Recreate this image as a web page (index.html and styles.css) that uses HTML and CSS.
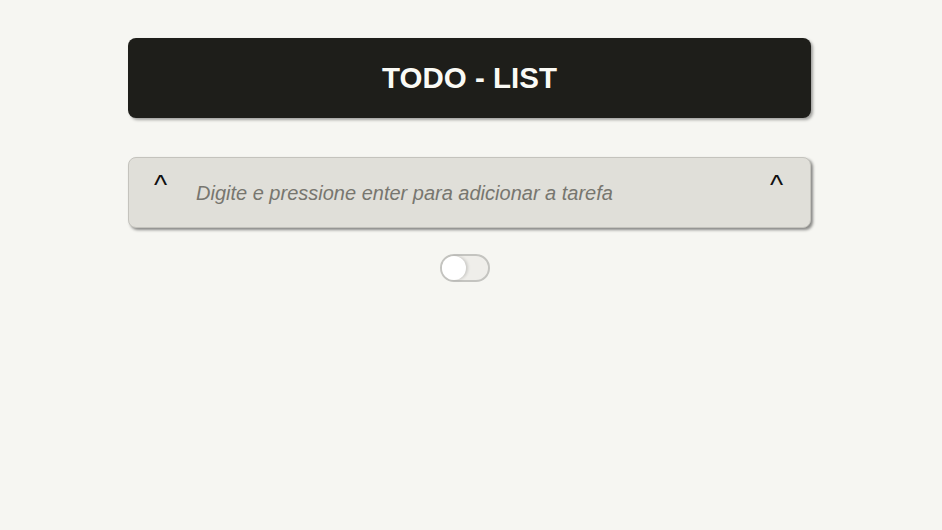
FILE: index.html
```html
<!DOCTYPE html>
<html lang="pt-BR">
<head>
    <meta charset="UTF-8">
    <meta name="viewport" content="width=device-width, initial-scale=1.0">
    <title>Todo List</title>
    <link rel="stylesheet" href="styles.css">
</head>
<body>
    <div class="container">
        <header class="header">
            <h1>TODO - LIST</h1>
        </header>

        <div class="new-task">
            <span class="arrow">^</span>
            <input type="text" id="task" placeholder="Digite e pressione enter para adicionar a tarefa">
            <span class="arrow">^</span>
        </div>

        <label class="switch">
            <input type="checkbox" id="theme">
            <span class="slider"></span>
        </label>
    </div>
</body>
</html>
```

FILE: styles.css
```css
body {
    font-family: 'Liberation Sans', Arial, sans-serif;
    background-color: #f6f6f2;
    margin: 0;
    padding: 38px 3px 38px 0;
    color: #1e1e1a;
}

.container {
    width: 683px;
    margin: 0 auto;
    display: flex;
    flex-direction: column;
    align-items: center;
}

.header {
    width: 100%;
    height: 80px;
    background: #1e1e1a;
    border-radius: 8px;
    box-shadow: 2px 2px 3px rgba(0, 0, 0, 0.35);
    display: flex;
    align-items: center;
    justify-content: center;
}

.header h1 {
    margin: 0;
    color: #fafaf5;
    font-size: 29.5px;
    font-weight: bold;
}

.new-task {
    width: 100%;
    height: 71px;
    margin-top: 39px;
    box-sizing: border-box;
    background: #e0dfd9;
    border: 1px solid #c4c3bd;
    border-radius: 8px;
    box-shadow: 2px 2px 3px rgba(0, 0, 0, 0.45);
    display: flex;
    align-items: flex-start;
    padding: 13px 25px 0 25px;
}

.arrow {
    font-size: 28px;
    line-height: 28px;
    width: 15px;
    color: #111;
}

.new-task input {
    flex: 1;
    border: none;
    background: transparent;
    outline: none;
    font-family: inherit;
    font-size: 20px;
    font-style: italic;
    margin: 11px 0 0 27px;
    padding: 0;
    color: #333;
}

.new-task input::placeholder {
    color: #77766f;
}

.switch {
    position: relative;
    display: inline-block;
    width: 50px;
    height: 28px;
    margin: 26px 9px 0 0;
}

.switch input {
    opacity: 0;
    width: 0;
    height: 0;
}

.slider {
    position: absolute;
    inset: 0;
    box-sizing: border-box;
    background: #efeeea;
    border: 2px solid #c4c4c0;
    border-radius: 14px;
    cursor: pointer;
}

.slider::before {
    content: "";
    position: absolute;
    left: 0;
    top: 0;
    width: 24px;
    height: 24px;
    border-radius: 50%;
    background: #fff;
    box-shadow: 2px 0 3px rgba(0, 0, 0, 0.15);
}
```
